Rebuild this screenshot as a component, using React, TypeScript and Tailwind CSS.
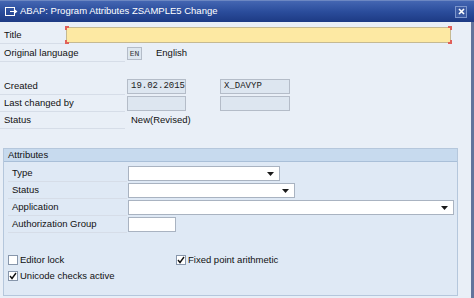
import React from 'react'

const font = { fontFamily: '"Liberation Sans", Arial, sans-serif' }
const mono = { fontFamily: '"Liberation Mono", "Courier New", monospace' }

function Label({ text, width = 'w-[125px]' }: { text: string; width?: string }) {
  return (
    <div className={`${width} h-full flex items-center pl-[4px] border-b border-[#d6dde8] text-[9.5px] text-[#111]`}>
      {text}
    </div>
  )
}

function Field({ value, className }: { value?: string; className: string }) {
  return (
    <div
      className={`h-[15px] border border-[#b4bcc8] bg-[#dde6f0] flex items-center pl-[3px] text-[9px] text-[#222] ${className}`}
      style={mono}
    >
      {value}
    </div>
  )
}

function Arrow() {
  return (
    <svg width="7" height="4" viewBox="0 0 7 4" className="absolute right-[5px] top-[5px]">
      <path d="M0 0 H7 L3.5 4 Z" fill="#1a1a1a" />
    </svg>
  )
}

function Dropdown({ className }: { className: string }) {
  return (
    <div className={`relative h-[15px] bg-white border border-[#a9b3c1] ${className}`}>
      <Arrow />
    </div>
  )
}

function Check({ checked }: { checked: boolean }) {
  return (
    <div className="w-[10px] h-[10px] bg-white border border-[#8796ab] flex items-center justify-center">
      {checked && (
        <svg width="8" height="8" viewBox="0 0 8 8">
          <path d="M1 4 L3 6.5 L7 1" stroke="#111" strokeWidth="1.4" fill="none" />
        </svg>
      )}
    </div>
  )
}

function Corner({ pos }: { pos: string }) {
  return <span className={`absolute w-[4px] h-[4px] border-[#e0605a] ${pos}`} />
}

export default function App() {
  return (
    <div className="w-[474px] h-[298px] overflow-hidden flex flex-col bg-[#e9eff7]" style={font}>
      {/* title bar */}
      <div className="h-[22px] flex items-center bg-gradient-to-b from-[#4466b2] via-[#2b4d9c] to-[#1d3a84] border-t border-[#6c87c2]">
        <svg width="13" height="11" viewBox="0 0 13 11" className="ml-[5px]">
          <rect x="0.5" y="1.5" width="9" height="8" fill="none" stroke="#fff" strokeWidth="1" />
          <path d="M5 5.5 H11 M9 3.5 L11.5 5.5 L9 7.5" stroke="#fff" strokeWidth="1.2" fill="none" />
        </svg>
        <span className="ml-[2px] text-[9.5px] text-white">ABAP: Program Attributes ZSAMPLE5 Change</span>
        <div className="ml-auto mr-[7px] w-[12px] h-[12px] border border-[#7d96cc] bg-[#3b5aa3] flex items-center justify-center">
          <svg width="7" height="7" viewBox="0 0 7 7">
            <path d="M1 1 L6 6 M6 1 L1 6" stroke="#fff" strokeWidth="1.6" />
          </svg>
        </div>
      </div>

      <div className="flex flex-1">
        <div className="flex-1 flex flex-col pt-[5px]">
          {/* Title */}
          <div className="flex h-[17px] items-stretch">
            <Label text="Title" width="w-[65px]" />
            <div className="relative ml-[1px] w-[385px] h-[16px] bg-[#fde9a3] border border-[#c5b992]">
              <Corner pos="-left-[2px] -top-[2px] border-l-2 border-t-2" />
              <Corner pos="-left-[2px] -bottom-[2px] border-l-2 border-b-2" />
              <Corner pos="-right-[2px] -top-[2px] border-r-2 border-t-2" />
              <Corner pos="-right-[2px] -bottom-[2px] border-r-2 border-b-2" />
            </div>
          </div>

          {/* Original language */}
          <div className="flex h-[17px] mt-[1px] items-center">
            <Label text="Original language" />
            <div className="ml-[2px] w-[15px] h-[13px] border border-[#b4bcc8] bg-[#dde6f0] flex items-center justify-center text-[8px] text-[#333]" style={mono}>
              EN
            </div>
            <span className="ml-[14px] text-[9.5px] text-[#111]">English</span>
          </div>

          {/* Created */}
          <div className="flex h-[17px] mt-[16px] items-center">
            <Label text="Created" />
            <Field value="19.02.2015" className="ml-[2px] w-[59px]" />
            <Field value="X_DAVYP" className="ml-[34px] w-[70px]" />
          </div>
          <div className="flex h-[17px] items-center">
            <Label text="Last changed by" />
            <Field className="ml-[2px] w-[59px]" />
            <Field className="ml-[34px] w-[70px]" />
          </div>
          <div className="flex h-[17px] items-center">
            <Label text="Status" />
            <span className="ml-[6px] text-[9.5px] text-[#111]">New(Revised)</span>
          </div>

          {/* Attributes group */}
          <div className="ml-[3px] mt-[19px] w-[455px] h-[148px] border border-[#b5c7dc] bg-[#dfe9f5]">
            <div className="h-[13px] bg-[#c7daee] border-b border-[#a9bfd8] flex items-center pl-[4px] text-[9.5px] text-[#111]">
              Attributes
            </div>
            <div className="flex flex-col pl-[4px] pt-[3px]">
              <div className="flex h-[17px] items-center">
                <Label text="Type" width="w-[119px]" />
                <Dropdown className="ml-[1px] w-[152px]" />
              </div>
              <div className="flex h-[17px] items-center">
                <Label text="Status" width="w-[119px]" />
                <Dropdown className="ml-[1px] w-[167px]" />
              </div>
              <div className="flex h-[17px] items-center">
                <Label text="Application" width="w-[119px]" />
                <Dropdown className="ml-[1px] w-[326px]" />
              </div>
              <div className="flex h-[17px] items-center">
                <Label text="Authorization Group" width="w-[119px]" />
                <div className="ml-[1px] w-[48px] h-[15px] bg-white border border-[#a9b3c1]" />
              </div>

              <div className="flex h-[16px] items-center mt-[19px]">
                <div className="flex items-center w-[168px]">
                  <Check checked={false} />
                  <span className="ml-[2px] text-[9.5px] text-[#111]">Editor lock</span>
                </div>
                <Check checked={true} />
                <span className="ml-[2px] text-[9.5px] text-[#111]">Fixed point arithmetic</span>
              </div>
              <div className="flex h-[16px] items-center">
                <Check checked={true} />
                <span className="ml-[2px] text-[9.5px] text-[#111]">Unicode checks active</span>
              </div>
            </div>
          </div>
        </div>
        <div className="w-[3px] bg-[#63749b]" />
      </div>
    </div>
  )
}
